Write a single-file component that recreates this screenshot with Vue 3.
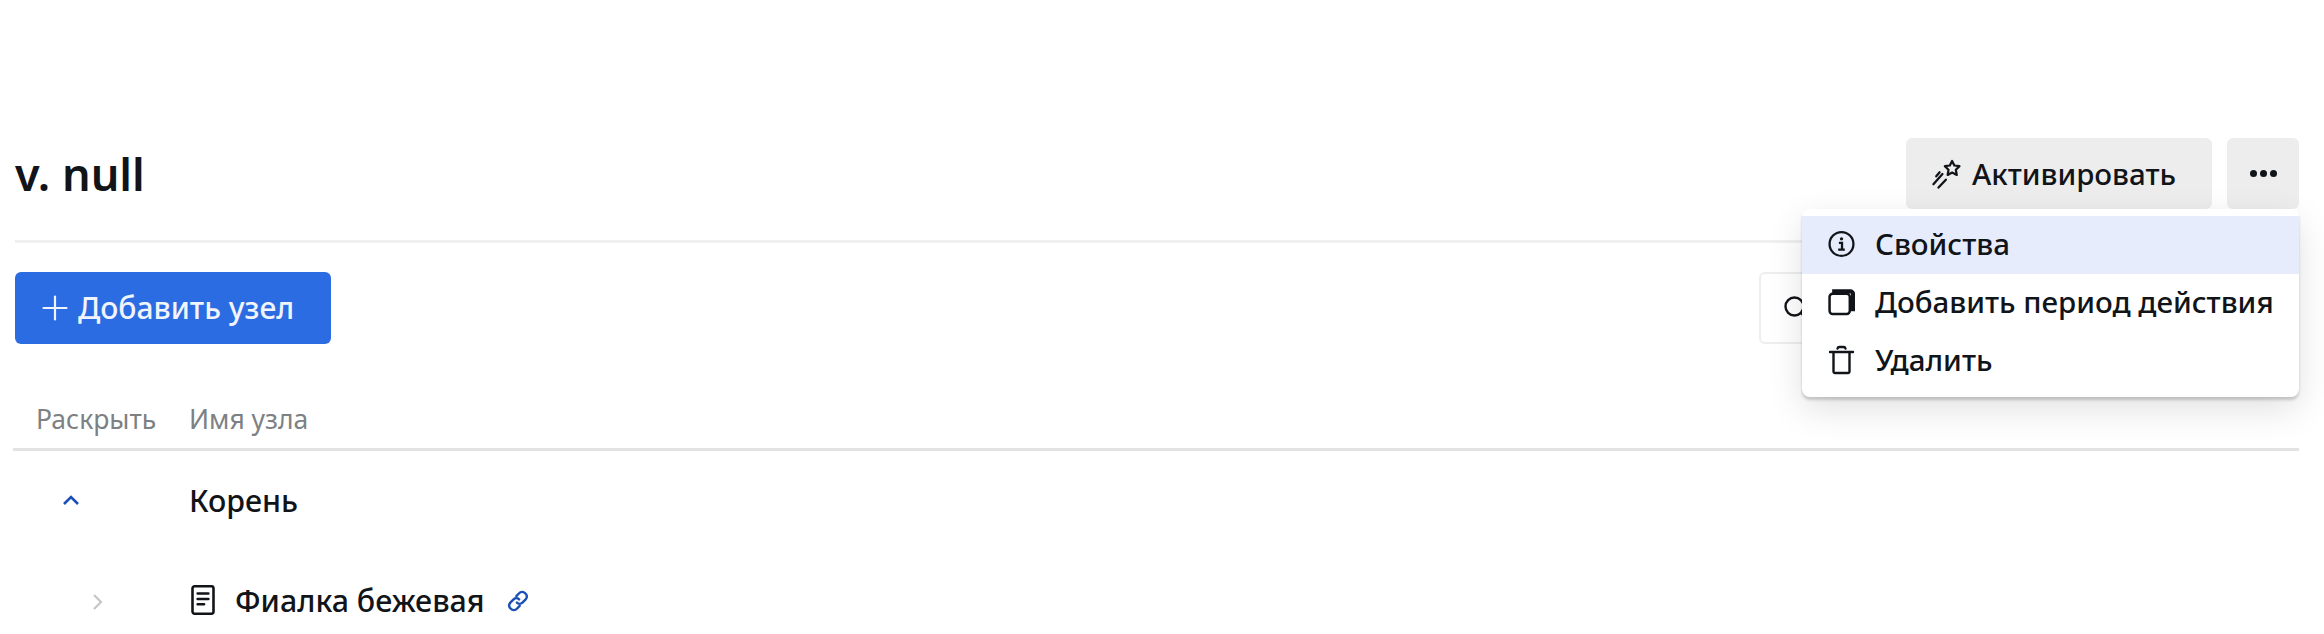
<script setup>
const menu = [
  { key: 'info', label: 'Свойства', active: true },
  { key: 'copy', label: 'Добавить период действия' },
  { key: 'trash', label: 'Удалить' },
]
</script>

<template>
  <div class="page">
    <header class="head">
      <h1 class="title">v. null</h1>
      <div class="actions">
        <button class="btn grey activate">
          <svg class="ic" viewBox="0 0 30 30" fill="none" stroke="#111418" stroke-width="2" stroke-linecap="round" stroke-linejoin="round">
            <path d="M19.5 3.5l2 4 4.5.6-3.2 3.2.8 4.5-4-2.1-4 2.1.7-4.5-3.2-3.2 4.4-.6z" />
            <path d="M11 15L3 24M14 20l-6.5 7M8.5 13.5L5.5 17" />
          </svg>
          Активировать
        </button>
        <button class="btn grey more" aria-label="more">
          <span class="dot"></span><span class="dot"></span><span class="dot"></span>
        </button>
        <div class="menu">
          <div v-for="m in menu" :key="m.key" class="item" :class="{ active: m.active }">
            <svg v-if="m.key === 'info'" class="mi" viewBox="0 0 26 26" fill="none" stroke="#111418" stroke-width="2.2">
              <circle cx="13" cy="13" r="11.5" />
              <path d="M10.5 12h3v6M9.8 18.5h6.4" stroke-width="2.2" />
              <circle cx="13" cy="8" r="1.6" fill="#111418" stroke="none" />
            </svg>
            <svg v-else-if="m.key === 'copy'" class="mi" viewBox="0 0 26 26" fill="none" stroke="#111418" stroke-width="2.4" stroke-linejoin="round">
              <rect x="1.5" y="5" width="19.5" height="19.5" rx="3" />
              <path d="M4 2.8h17.5a2.6 2.6 0 0 1 2.6 2.6V22" stroke-width="4" />
            </svg>
            <svg v-else class="mi" viewBox="0 0 26 30" fill="none" stroke="#111418" stroke-width="2.4" stroke-linecap="round" stroke-linejoin="round">
              <path d="M1.5 7h23M5 7v19.5a1.5 1.5 0 0 0 1.5 1.5h13a1.5 1.5 0 0 0 1.5-1.5V7M9 3.5A2 2 0 0 1 11 2h4a2 2 0 0 1 2 1.5" />
            </svg>
            <span>{{ m.label }}</span>
          </div>
        </div>
      </div>
    </header>

    <div class="toolbar">
      <button class="btn primary">
        <svg class="plus" viewBox="0 0 26 26" fill="none" stroke="#f0f4fc" stroke-width="2.2" stroke-linecap="round">
          <path d="M13 1.5v23M1.5 13h23" />
        </svg>
        <span class="plabel">Добавить узел</span>
      </button>
      <div class="search">
        <svg class="sicon" viewBox="0 0 26 26" fill="none" stroke="#111418" stroke-width="2.4" stroke-linecap="round">
          <circle cx="11.5" cy="11.5" r="9" />
          <path d="M18 18l6 6" />
        </svg>
      </div>
    </div>

    <div class="thead">
      <span class="c1">Раскрыть</span>
      <span class="c2">Имя узла</span>
    </div>

    <div class="row root">
      <span class="c1 chev">
        <svg viewBox="0 0 16 10" width="16" height="10" fill="none" stroke="#1a4fb8" stroke-width="2.6">
          <path d="M1 9l7-7 7 7" />
        </svg>
      </span>
      <span class="c2 name">Корень</span>
    </div>

    <div class="row child">
      <span class="c1 chev">
        <svg class="right" viewBox="0 0 10 16" width="10" height="16" fill="none" stroke="#c4c6c9" stroke-width="2.2">
          <path d="M1 1l7 7-7 7" />
        </svg>
      </span>
      <span class="c2 name">
        <svg class="doc" viewBox="0 0 22 28" fill="none" stroke="#111418" stroke-width="2.4" stroke-linecap="round" stroke-linejoin="round">
          <rect x="1.2" y="1.2" width="19.6" height="25.6" rx="2" />
          <path d="M6 8h10M6 13h10M6 18h6" />
        </svg>
        Фиалка бежевая
        <svg class="link" viewBox="0 0 20 20" fill="none" stroke="#1a4fb8" stroke-width="2.2" stroke-linecap="round">
          <path d="M8.5 5.5l2.5-2.5a3.6 3.6 0 0 1 5.5 0 3.6 3.6 0 0 1 .5 5.5l-3 3a3.6 3.6 0 0 1-5 0" />
          <path d="M11.5 14.5L9 17a3.6 3.6 0 0 1-5.5 0 3.6 3.6 0 0 1-.5-5.5l3-3a3.6 3.6 0 0 1 5 0" />
        </svg>
      </span>
    </div>
  </div>
</template>

<style scoped>
.page {
  width: 2324px;
  height: 634px;
  padding: 0 25px 0 15px;
  box-sizing: border-box;
  overflow: hidden;
  background: #fff;
  font-family: "Noto Sans", Inter, sans-serif;
  color: #111418;
}
.head {
  padding-top: 138px;
  height: 102px;
  display: flex;
  justify-content: space-between;
  align-items: flex-start;
  border-bottom: 3px solid #f0f0f0;
}
.title {
  margin: 0;
  font-size: 45px;
  line-height: 71px;
  font-weight: 600;
}
.actions {
  position: relative;
  display: flex;
  gap: 15px;
}
.btn {
  border: 0;
  border-radius: 6px;
  font-family: inherit;
  font-size: 29.5px;
  font-weight: 500;
  height: 71px;
  display: flex;
  align-items: center;
  justify-content: center;
  padding: 0;
  color: #111418;
}
.grey { background: #ededed; }
.activate { width: 306px; gap: 8px; padding-right: 12px; box-sizing: border-box; }
.ic { width: 34px; height: 34px; }
.more { width: 72px; gap: 3px; }
.dot { width: 7px; height: 7px; border-radius: 50%; background: #111418; }
.menu {
  position: absolute;
  right: 0;
  top: 71px;
  width: 497px;
  height: 188px;
  padding-top: 7px;
  box-sizing: border-box;
  background: #fff;
  border-radius: 8px;
  box-shadow: 0 3px 3px rgba(0, 0, 0, 0.18), 0 12px 36px rgba(0, 0, 0, 0.12);
  z-index: 2;
}
.item {
  height: 58px;
  display: flex;
  align-items: center;
  gap: 20px;
  padding-left: 26px;
  font-size: 29.5px;
  font-weight: 500;
}
.item > span { position: relative; top: -2px; }
.item > .mi { position: relative; top: -1px; }
.item.active { background: #e6ecfc; }
.mi { width: 27px; height: 30px; flex: none; }
.toolbar {
  display: flex;
  justify-content: space-between;
  align-items: flex-start;
  padding-top: 29px;
}
.primary {
  width: 316px;
  height: 72px;
  background: #2b6ce3;
  color: #f0f4fc;
  gap: 10px;
  justify-content: flex-start;
  padding-left: 27px;
  font-size: 30px;
}
.plabel { position: relative; top: -1px; }
.plus { width: 26px; height: 26px; }
.search {
  width: 540px;
  height: 72px;
  box-sizing: border-box;
  border: 2px solid #eeeeee;
  border-radius: 6px;
  display: flex;
  align-items: center;
  padding-left: 22px;
}
.sicon { width: 26px; height: 26px; }
.thead {
  display: flex;
  margin-top: 28px;
  margin-left: -2px;
  padding-bottom: 11px;
  height: 65px;
  align-items: flex-end;
  border-bottom: 3px solid #e3e3e3;
  color: #7d8184;
  font-size: 26.5px;
}
.c1 { width: 176px; padding-left: 23px; box-sizing: border-box; flex: none; }
.c2 { flex: 1; }
.row {
  display: flex;
  align-items: center;
  font-size: 30.4px;
  font-weight: 500;
  margin-left: -2px;
}
.root { height: 98px; }
.child { height: 102px; }
.chev { display: flex; }
.root .chev { padding-left: 50px; }
.child .chev { padding-left: 80px; padding-top: 3px; }
.name { display: flex; align-items: center; }
.doc { width: 24px; height: 30px; margin-right: 20px; margin-left: 2px; }
.link { width: 22px; height: 22px; margin-left: 22px; margin-top: 2px; }
</style>
